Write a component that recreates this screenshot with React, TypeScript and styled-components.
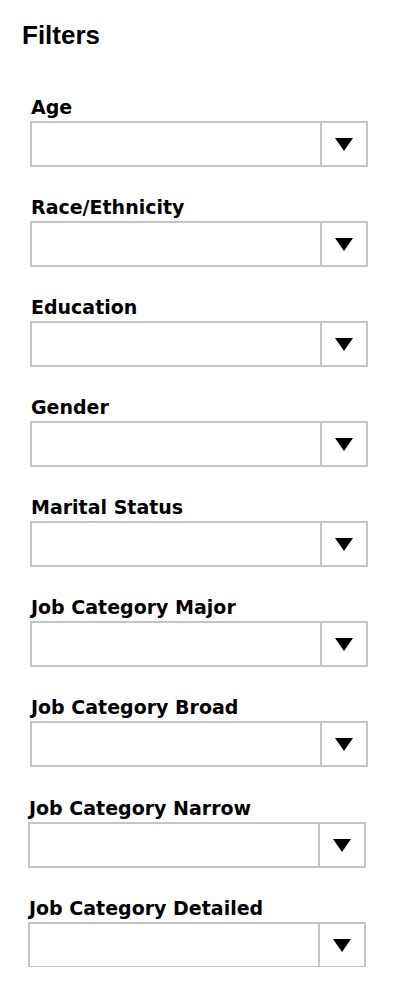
import React from "react";
import styled, { createGlobalStyle } from "styled-components";

const Global = createGlobalStyle`
  html, body { margin: 0; padding: 0; background: #ffffff; }
  body { font-family: "DejaVu Sans", "Liberation Sans", sans-serif; color: #000; }
`;

const Panel = styled.div`
  display: flex;
  flex-direction: column;
  padding: 20px 0 0 0;
  width: 400px;
`;

const Title = styled.h1`
  margin: 0 0 47px 22px;
  font-family: "Liberation Sans", Arial, sans-serif;
  font-size: 26px;
  line-height: 30px;
  font-weight: 700;
`;

const Groups = styled.div`
  display: flex;
  flex-direction: column;
  gap: 30px;
`;

const Group = styled.div<{ $shift: number }>`
  display: flex;
  flex-direction: column;
  gap: 4px;
  margin-left: ${(p) => 30 + p.$shift}px;
  margin-top: ${(p) => (p.$shift ? 1 : 0)}px;
  margin-bottom: ${(p) => (p.$shift ? -1 : 0)}px;
`;

const Label = styled.label`
  display: block;
  padding-left: 1px;
  font-size: 19px;
  line-height: 20px;
  font-weight: 700;
  white-space: nowrap;
`;

const SelectBox = styled.div`
  display: flex;
  width: 338px;
  height: 46px;
  box-sizing: border-box;
  border: 2px solid #c4c4c4;
  background: #fff;
`;

const Value = styled.div`
  flex: 1;
`;

const Toggle = styled.div`
  width: 44px;
  display: flex;
  align-items: center;
  justify-content: center;
  border-left: 2px solid #c4c4c4;
`;

const Arrow = () => (
  <svg width="18" height="13" viewBox="0 0 18 13">
    <polygon points="0,0 18,0 9,13" fill="#000" />
  </svg>
);

const filters: { label: string; shift: number }[] = [
  { label: "Age", shift: 0 },
  { label: "Race/Ethnicity", shift: 0 },
  { label: "Education", shift: 0 },
  { label: "Gender", shift: 0 },
  { label: "Marital Status", shift: 0 },
  { label: "Job Category Major", shift: 0 },
  { label: "Job Category Broad", shift: 0 },
  { label: "Job Category Narrow", shift: -2 },
  { label: "Job Category Detailed", shift: -2 },
];

export default function App() {
  return (
    <>
      <Global />
      <Panel>
        <Title>Filters</Title>
        <Groups>
          {filters.map((f) => (
            <Group key={f.label} $shift={f.shift}>
              <Label>{f.label}</Label>
              <SelectBox>
                <Value />
                <Toggle>
                  <Arrow />
                </Toggle>
              </SelectBox>
            </Group>
          ))}
        </Groups>
      </Panel>
    </>
  );
}
